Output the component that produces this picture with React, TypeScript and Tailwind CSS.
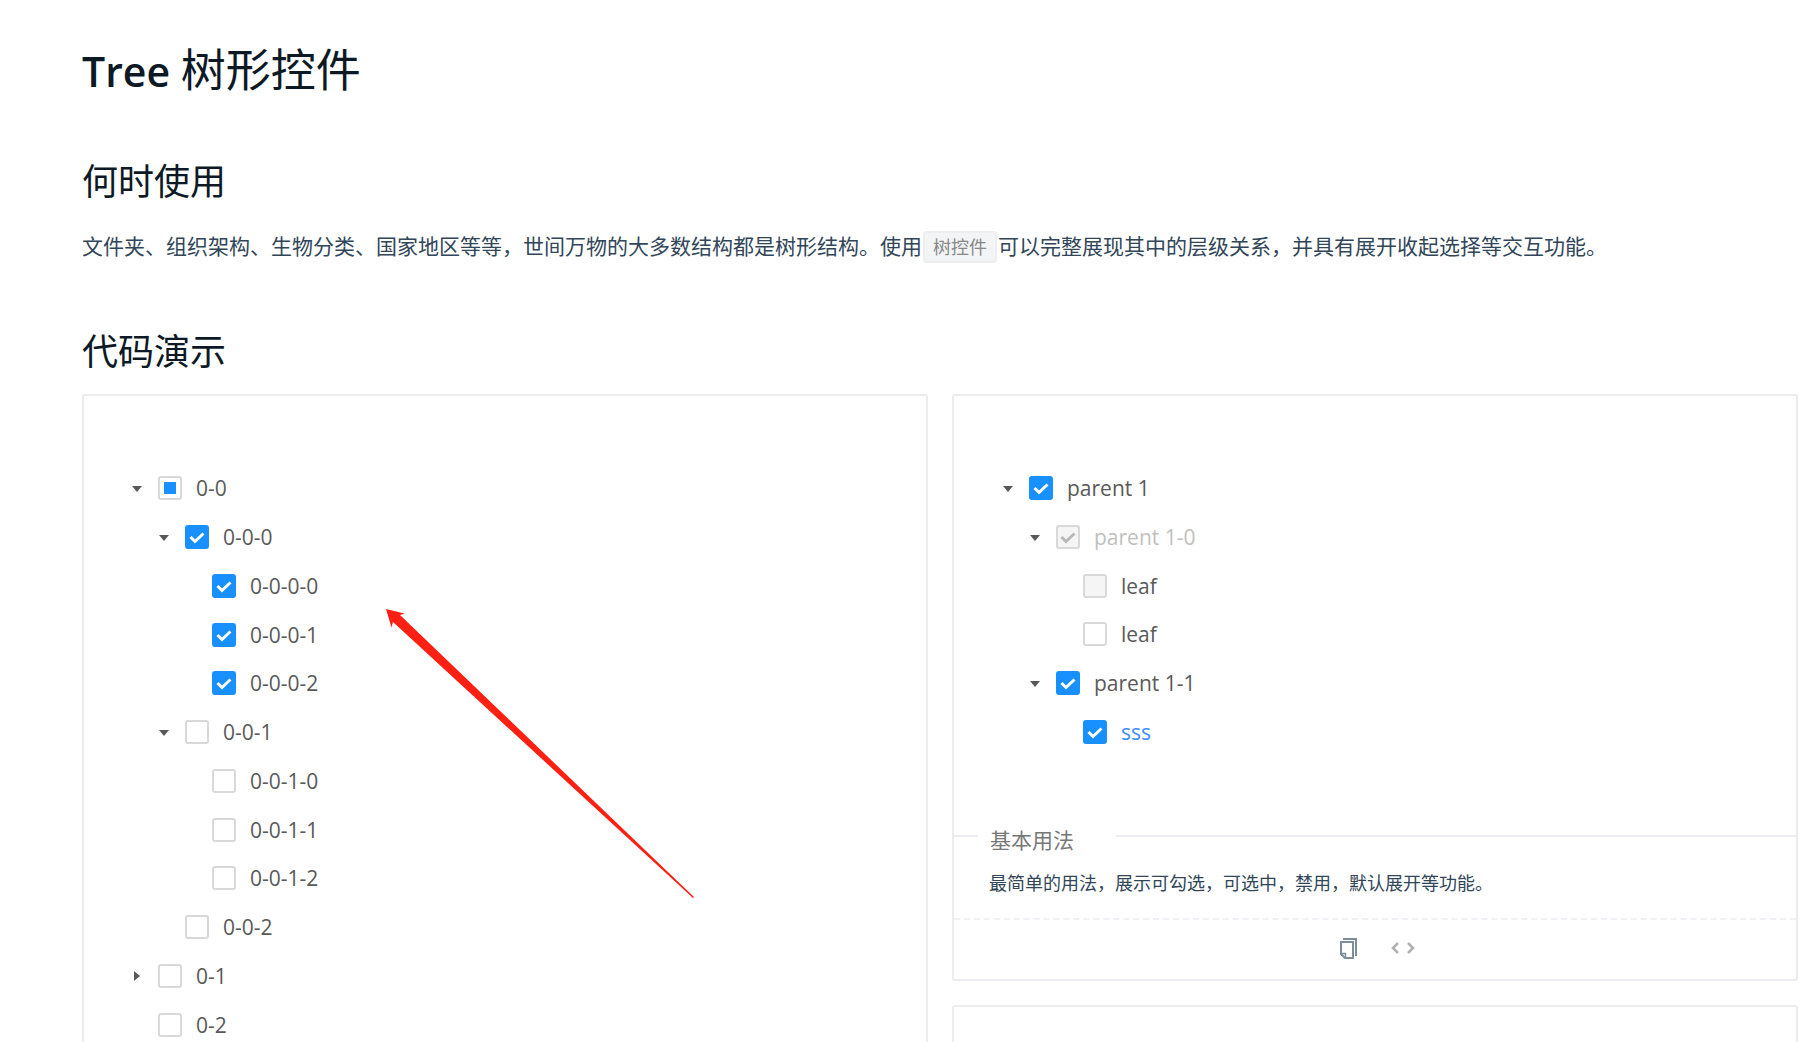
import { useState } from "react";
import type { ReactNode } from "react";

type CheckState = "on" | "off" | "partial";

interface TreeRow {
  id: string;
  title: string;
  depth: number;
  check: CheckState;
  open?: boolean;
  tone?: "link" | "muted";
  disabled?: boolean;
}

const NUMBER_ROWS: TreeRow[] = [
  { id: "0-0", title: "0-0", depth: 0, check: "partial", open: true },
  { id: "0-0-0", title: "0-0-0", depth: 1, check: "on", open: true },
  { id: "0-0-0-0", title: "0-0-0-0", depth: 2, check: "on" },
  { id: "0-0-0-1", title: "0-0-0-1", depth: 2, check: "on" },
  { id: "0-0-0-2", title: "0-0-0-2", depth: 2, check: "on" },
  { id: "0-0-1", title: "0-0-1", depth: 1, check: "off", open: true },
  { id: "0-0-1-0", title: "0-0-1-0", depth: 2, check: "off" },
  { id: "0-0-1-1", title: "0-0-1-1", depth: 2, check: "off" },
  { id: "0-0-1-2", title: "0-0-1-2", depth: 2, check: "off" },
  { id: "0-0-2", title: "0-0-2", depth: 1, check: "off" },
  { id: "0-1", title: "0-1", depth: 0, check: "off", open: false },
  { id: "0-2", title: "0-2", depth: 0, check: "off" },
];

const PARENT_ROWS: TreeRow[] = [
  { id: "p1", title: "parent 1", depth: 0, check: "on", open: true },
  { id: "p1-0", title: "parent 1-0", depth: 1, check: "on", open: true, tone: "muted", disabled: true },
  { id: "p1-0-a", title: "leaf", depth: 2, check: "off", disabled: true },
  { id: "p1-0-b", title: "leaf", depth: 2, check: "off" },
  { id: "p1-1", title: "parent 1-1", depth: 1, check: "on", open: true },
  { id: "p1-1-a", title: "sss", depth: 2, check: "on", tone: "link" },
];

const INDENT = ["pl-0", "pl-[27px]", "pl-[54px]"];

const TONE = {
  base: "text-[#595959]",
  link: "text-[#3c8cff]",
  muted: "text-[#bfbfbf]",
};

export default function App() {
  return (
    <main className="h-screen overflow-hidden bg-white pl-[82px] pr-[10px] pt-[43px] font-['Open_Sans','Noto_Sans_CJK_SC',sans-serif] text-[#314659]">
      <h1 className="text-[41px] leading-[54px] font-semibold text-[#0d1a26]">
        Tree <span className="text-[45px] font-normal">树形控件</span>
      </h1>

      <h2 className="mt-[60px] text-[36px] leading-[48px] text-[#0d1a26]">何时使用</h2>
      <p className="mt-[19px] text-[21px] leading-[42px]">
        文件夹、组织架构、生物分类、国家地区等等，世间万物的大多数结构都是树形结构。使用
        <code className="mx-[1px] rounded-[4px] border-2 border-[#eeeeee] bg-[#f2f4f5] px-[8px] py-[2px] font-['Open_Sans','Noto_Sans_CJK_SC',sans-serif] text-[18px] text-[#888888]">
          树控件
        </code>
        可以完整展现其中的层级关系，并具有展开收起选择等交互功能。
      </p>

      <h2 className="mt-[60px] text-[36px] leading-[48px] text-[#0d1a26]">代码演示</h2>
      <div className="mt-[18px] grid grid-cols-2 items-start gap-6">
        <Card>
          <div className="px-[46px] pt-[68px] pb-[72px]">
            <Tree rows={NUMBER_ROWS} className="min-h-[585px]" />
          </div>
          <Arrow />
        </Card>

        <div className="flex flex-col gap-6">
          <Card>
            <div className="px-[47px] pt-[68px] pb-[72px]">
              <Tree rows={PARENT_ROWS} className="min-h-[292px]" />
            </div>
            <CardTitle>基本用法</CardTitle>
            <p className="px-[35px] pt-[18px] pb-[21px] text-[18px] leading-[27px]">
              最简单的用法，展示可勾选，可选中，禁用，默认展开等功能。
            </p>
            <div className="flex h-[61px] items-center justify-center gap-[34px] border-t-2 border-dashed border-[#f1f1f5] pb-[3px] pl-[4px]">
              <button type="button" aria-label="复制代码">
                <CopyIcon />
              </button>
              <button type="button" aria-label="显示代码">
                <CodeIcon />
              </button>
            </div>
          </Card>
          <Card>
            <div className="h-[200px]" />
          </Card>
        </div>
      </div>
    </main>
  );
}

function Card({ children }: { children: ReactNode }) {
  return <section className="relative rounded-[3px] border-2 border-[#ebebf0]">{children}</section>;
}

function CardTitle({ children }: { children: ReactNode }) {
  return (
    <div className="flex items-start">
      <span className="mt-[7px] h-[2px] w-6 bg-[#ebebf0]" />
      <h3 className="pr-[42px] pl-[12px] text-[21px] leading-[24px] text-[#777777]">{children}</h3>
      <span className="mt-[7px] h-[2px] flex-1 bg-[#ebebf0]" />
    </div>
  );
}

function Tree({ rows, className }: { rows: TreeRow[]; className: string }) {
  return (
    <ul role="tree" className={`grid auto-rows-fr ${className}`}>
      {rows.map((row) => (
        <TreeItem key={row.id} row={row} />
      ))}
    </ul>
  );
}

function TreeItem({ row }: { row: TreeRow }) {
  const [check, setCheck] = useState<CheckState>(row.check);

  return (
    <li role="treeitem" className={`flex items-center ${INDENT[row.depth]}`}>
      {row.open === undefined ? (
        <span className="w-[14px]" />
      ) : (
        <button
          type="button"
          aria-label={row.open ? "收起" : "展开"}
          className="flex h-6 w-[14px] items-center justify-center"
        >
          <Caret open={row.open} />
        </button>
      )}
      <label className="ml-[14px] flex items-center gap-[14px]">
        <span className="relative h-6 w-6">
          <input
            type="checkbox"
            checked={check === "on"}
            disabled={row.disabled}
            onChange={() => setCheck(check === "on" ? "off" : "on")}
            className="block h-6 w-6 appearance-none rounded-[3px] border-2 border-[#d9d9d9] bg-white enabled:checked:border-[#1890ff] enabled:checked:bg-[#1890ff] disabled:bg-[#f5f5f5]"
          />
          {check === "partial" && (
            <span className="pointer-events-none absolute inset-[6px] bg-[#1890ff]" />
          )}
          {check === "on" && (
            <svg
              viewBox="0 0 24 24"
              fill="none"
              strokeWidth="3"
              className={`pointer-events-none absolute inset-0 ${
                row.disabled ? "stroke-[#b8b8b8]" : "stroke-white"
              }`}
            >
              <path d="M5.500 12 10 16.500 18.500 8.500" />
            </svg>
          )}
        </span>
        <span className={`text-[21px] leading-[30px] ${TONE[row.tone ?? "base"]}`}>{row.title}</span>
      </label>
    </li>
  );
}

function Caret({ open }: { open: boolean }) {
  return (
    <svg width="12" height="12" viewBox="0 0 12 12" fill="#595959">
      {open ? <path d="M1 4h10L6 10z" /> : <path d="M3 1v10l6-5z" />}
    </svg>
  );
}

function CopyIcon() {
  return (
    <svg width="17" height="21" viewBox="0 0 17 21" fill="none" stroke="#7d8d99" strokeWidth="2">
      <path d="M3 1h13v17" />
      <path d="M1 4h12v16H5L1 16z" />
      <path d="M1 15.500h4.500V20" strokeWidth="1.500" />
    </svg>
  );
}

function CodeIcon() {
  return (
    <svg width="24" height="12" viewBox="0 0 24 12" fill="none" stroke="#b0b0b0" strokeWidth="2.500">
      <path d="M7 1 2 6l5 5M17 1l5 5-5 5" />
    </svg>
  );
}

// Points at the checked leaves, drawn over the card.
function Arrow() {
  return (
    <svg
      width="310"
      height="290"
      viewBox="0 0 310 290"
      fill="#ff2014"
      className="pointer-events-none absolute top-[213px] left-[302px]"
    >
      <path d="M0 0 18.500 4.500 14 6 308 288 307 289 7 13 5.500 18.500z" />
    </svg>
  );
}
